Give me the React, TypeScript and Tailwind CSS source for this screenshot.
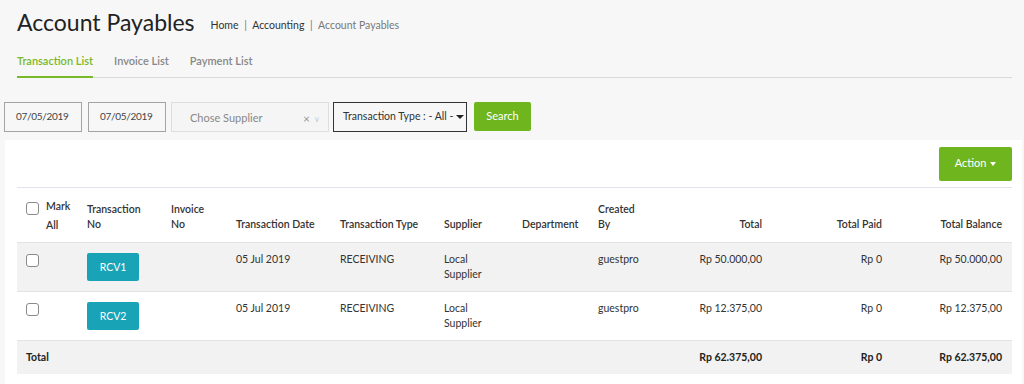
import React from "react";

const ROWS = [
  { no: "RCV1", date: "05 Jul 2019", type: "RECEIVING", supplier: "Local Supplier", by: "guestpro", total: "Rp 50.000,00", paid: "Rp 0", balance: "Rp 50.000,00" },
  { no: "RCV2", date: "05 Jul 2019", type: "RECEIVING", supplier: "Local Supplier", by: "guestpro", total: "Rp 12.375,00", paid: "Rp 0", balance: "Rp 12.375,00" },
];

function Checkbox() {
  return <span className="inline-block w-[13px] h-[13px] rounded-[3px] border border-[#8a8a8a] bg-white align-middle" />;
}

export default function App() {
  return (
    <div className="w-[1024px] h-[384px] overflow-hidden bg-[#f7f7f7] font-['Lato',sans-serif] text-[#333]">
      {/* Header */}
      <div className="px-[17px] pt-[7px]">
        <div className="flex items-end gap-[16px]">
          <h1 className="text-[23px] leading-[30px] text-[#222] font-normal">Account Payables</h1>
          <div className="text-[10.5px] leading-[14px] pb-[5px] text-[#333]">
            Home <span className="mx-[3px] text-[#777]">|</span> Accounting{" "}
            <span className="mx-[3px] text-[#777]">|</span> <span className="text-[#777]">Account Payables</span>
          </div>
        </div>

        {/* Tabs */}
        <div className="mt-[16px] flex border-b border-[#d9d9d9] -mr-[5px] text-[11px] font-semibold">
          <div className="pb-[6px] border-b-2 border-[#7ab929] -mb-px text-[#7ab929]">Transaction List</div>
          <div className="pb-[6px] ml-[21px] text-[#888]">Invoice List</div>
          <div className="pb-[6px] ml-[21px] text-[#888]">Payment List</div>
        </div>
      </div>

      {/* Filters */}
      <div className="mt-[24px] flex items-start pl-[4px] text-[11px]">
        <div className="w-[78px] h-[30px] flex items-center pl-[11px] border border-[#a3a3a3] bg-[#f7f7f7] text-[#444] text-[10px] tracking-[-0.3px]">07/05/2019</div>
        <div className="ml-[6px] w-[78px] h-[30px] flex items-center pl-[11px] border border-[#a3a3a3] bg-[#f7f7f7] text-[#444] text-[10px] tracking-[-0.3px]">07/05/2019</div>
        <div className="ml-[5px] w-[158px] h-[30px] flex items-center pl-[18px] pr-[8px] pt-[4px] border border-[#dedede] bg-[#f5f5f5] text-[#888]">
          <span className="flex-1">Chose Supplier</span>
          <span className="text-[#999] text-[12px]">×</span>
          <span className="ml-[4px] text-[#ccc] text-[8px]">&#x2228;</span>
        </div>
        <div className="ml-[4px] w-[134px] h-[30px] flex items-center pl-[9px] border border-[#333] bg-[#f7f7f7] text-[#333] text-[10.5px]">
          Transaction Type : - All -
          <span className="ml-[3px] w-0 h-0 border-l-[4px] border-r-[4px] border-t-[4px] border-l-transparent border-r-transparent border-t-[#222]" />
        </div>
        <div className="ml-[7px] w-[57px] h-[29px] flex items-center justify-center rounded-[2px] bg-[#6fb51e] text-white">Search</div>
      </div>

      {/* Card */}
      <div className="mt-[8px] ml-[5px] mr-[2px] bg-white h-[300px] pl-[12px] pr-[10px] pt-[7px]">
        <div className="flex justify-end border-b border-[#e3e3ec] pb-[6px]">
          <div className="w-[73px] h-[34px] flex items-center justify-center rounded-[2px] bg-[#6fb51e] text-white text-[11px]">
            Action
            <span className="ml-[4px] w-0 h-0 border-l-[3.5px] border-r-[3.5px] border-t-[4px] border-l-transparent border-r-transparent border-t-white" />
          </div>
        </div>

        <table className="w-[995px] table-fixed border-collapse text-[10.5px] leading-[15px]">
          <colgroup>
            <col className="w-[62px]" />
            <col className="w-[84px]" />
            <col className="w-[65px]" />
            <col className="w-[104px]" />
            <col className="w-[104px]" />
            <col className="w-[78px]" />
            <col className="w-[76px]" />
            <col className="w-[60px]" />
            <col className="w-[122px]" />
            <col className="w-[120px]" />
            <col className="w-[120px]" />
          </colgroup>
          <thead>
            <tr className="h-[55px] font-semibold text-[#333]">
              <th className="align-top text-left pl-[9px] pt-[12px] font-semibold">
                <div className="flex items-start">
                  <span className="mt-[1px]"><Checkbox /></span>
                  <span className="ml-[7px] leading-[19px] -mt-[3px]">Mark<br />All</span>
                </div>
              </th>
              <th className="align-bottom text-left pl-[8px] pb-[10px] font-semibold">Transaction<br />No</th>
              <th className="align-bottom text-left pl-[8px] pb-[10px] font-semibold">Invoice<br />No</th>
              <th className="align-bottom text-left pl-[8px] pb-[10px] font-semibold">Transaction Date</th>
              <th className="align-bottom text-left pl-[8px] pb-[10px] font-semibold">Transaction Type</th>
              <th className="align-bottom text-left pl-[8px] pb-[10px] font-semibold">Supplier</th>
              <th className="align-bottom text-left pl-[8px] pb-[10px] font-semibold">Department</th>
              <th className="align-bottom text-left pl-[8px] pb-[10px] font-semibold">Created<br />By</th>
              <th className="align-bottom text-right pr-[10px] pb-[10px] font-semibold">Total</th>
              <th className="align-bottom text-right pr-[10px] pb-[10px] font-semibold">Total Paid</th>
              <th className="align-bottom text-right pr-[10px] pb-[10px] font-semibold">Total Balance</th>
            </tr>
          </thead>
          <tbody>
            {ROWS.map((r, i) => (
              <tr key={r.no} className={`h-[49px] border-t border-[#e3e3e3] ${i === 0 ? "bg-[#f2f2f2]" : "bg-white"}`}>
                <td className="align-top pl-[9px] pt-[9px]"><Checkbox /></td>
                <td className="align-top pl-[8px] pt-[10px]">
                  <div className="w-[52px] h-[28px] flex items-center justify-center rounded-[2px] bg-[#18a3b6] text-white">{r.no}</div>
                </td>
                <td />
                <td className="align-top pl-[8px] pt-[9px]">{r.date}</td>
                <td className="align-top pl-[8px] pt-[9px]">{r.type}</td>
                <td className="align-top pl-[8px] pt-[9px]">Local<br />Supplier</td>
                <td />
                <td className="align-top pl-[8px] pt-[9px]">{r.by}</td>
                <td className="align-top text-right pr-[10px] pt-[9px]">{r.total}</td>
                <td className="align-top text-right pr-[10px] pt-[9px]">{r.paid}</td>
                <td className="align-top text-right pr-[10px] pt-[9px]">{r.balance}</td>
              </tr>
            ))}
            <tr className="h-[33px] bg-[#f2f2f2] border-t border-[#e3e3e3] font-bold text-[#222]">
              <td colSpan={8} className="pl-[9px]">Total</td>
              <td className="text-right pr-[10px]">Rp 62.375,00</td>
              <td className="text-right pr-[10px]">Rp 0</td>
              <td className="text-right pr-[10px]">Rp 62.375,00</td>
            </tr>
          </tbody>
        </table>
      </div>
    </div>
  );
}
